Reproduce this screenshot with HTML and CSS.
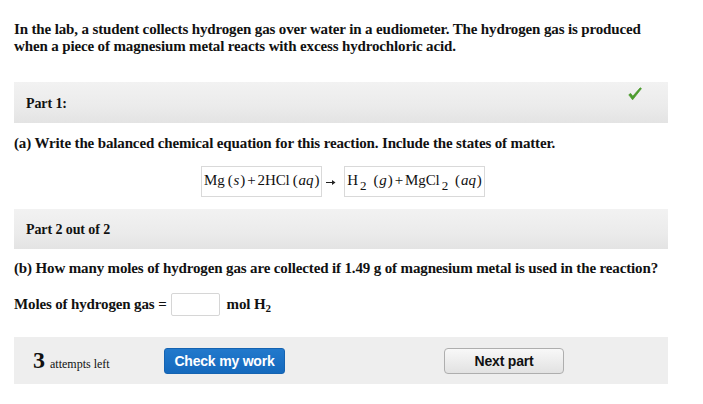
FILE: index.html
```html
<!DOCTYPE html>
<html>
<head>
<meta charset="utf-8">
<link rel="stylesheet" href="styles.css">
</head>
<body>
<div class="page">
  <p class="intro">In the lab, a student collects hydrogen gas over water in a eudiometer. The hydrogen gas is produced when a piece of magnesium metal reacts with excess hydrochloric acid.</p>

  <div class="bar part1">
    <span class="bar-title">Part 1:</span>
    <svg class="check" width="14" height="14" viewBox="0 0 14 14"><path d="M0.8 7.8 L4.6 12.8 L13.4 1.6 L12.2 0.8 L4.8 9.2 L2.6 6.4 Z" fill="#4b9b2c" stroke="#4b9b2c" stroke-width="0.8" stroke-linejoin="round"/></svg>
  </div>

  <p class="question">(a) Write the balanced chemical equation for this reaction. Include the states of matter.</p>

  <div class="equation">
    <span class="eqbox">Mg<span class="sp"></span>(<span class="th"></span><i>s</i><span class="th"></span>)<span class="op">+</span>2HCl<span class="sp"></span>(<span class="th"></span><i>aq</i><span class="th"></span>)</span>
    <svg class="arrow" width="10" height="7" viewBox="0 0 10 7"><path d="M0 3.5 H8" stroke="#222" stroke-width="1"/><path d="M6 1 L9.5 3.5 L6 6 Z" fill="#222"/></svg>
    <span class="eqbox">H<sub>2</sub><span class="sp2"></span>(<span class="th"></span><i>g</i><span class="th"></span>)<span class="op">+</span>MgCl<sub>2</sub><span class="sp2"></span>(<span class="th"></span><i>aq</i><span class="th"></span>)</span>
  </div>

  <div class="bar part2">
    <span class="bar-title">Part 2 out of 2</span>
  </div>

  <p class="question q2">(b) How many moles of hydrogen gas are collected if 1.49 g of magnesium metal is used in the reaction?</p>

  <div class="answer">
    <span>Moles of hydrogen gas =</span>
    <span class="input"></span>
    <span>mol H<sub>2</sub></span>
  </div>

  <div class="footer">
    <div class="attempts"><span class="num">3</span><span class="left">attempts left</span></div>
    <button class="btn btn-primary">Check my work</button>
    <button class="btn btn-next">Next part</button>
  </div>
</div>
</body>
</html>
```
FILE: styles.css
```css
html, body { margin: 0; padding: 0; background: #fff; }
body { font-family: "Liberation Serif", "Times New Roman", serif; color: #111; }
.page { width: 654px; padding: 21px 0 0 14px; }
.intro { margin: 0; width: 640px; font-weight: bold; font-size: 15px; line-height: 17px; letter-spacing: -0.14px; }
.bar {
  display: flex; align-items: center; justify-content: space-between;
  height: 41px; padding: 0 26px 0 12px;
  background: linear-gradient(#f2f2f2, #ebebeb 60%, #e3e3e3);
}
.part1 { margin-top: 27px; }
.bar-title { font-weight: bold; font-size: 14px; letter-spacing: -0.1px; padding-top: 2px; }
.part1 .bar-title { padding-top: 3px; }
.check { align-self: flex-start; margin-top: 5px; }
.question { margin: 11px 0 0 0; font-weight: bold; font-size: 15px; line-height: 18px; letter-spacing: -0.14px; }
.equation { display: flex; align-items: center; margin: 14px 0 0 187px; font-size: 15px; letter-spacing: -0.1px; }
.eqbox { display: inline-flex; align-items: baseline; height: 29px; line-height: 27px; padding: 0 2px 0 2px; border: 1px solid #d9d9d9; }
.eqbox sub { font-size: 13px; line-height: 0; position: relative; top: 5px; vertical-align: baseline; margin-left: 2px; }
.sp { display: inline-block; width: 3px; }
.sp2 { display: inline-block; width: 7px; }
.th { display: inline-block; width: 1px; }
.op { margin: 0 2px; }
.arrow { margin: 1px 8px 0 4px; }
.part2 { margin-top: 12px; height: 40px; }
.q2 { margin-top: 10px; }
.answer { display: flex; align-items: center; gap: 5px; margin-top: 16px; font-weight: bold; font-size: 15px; letter-spacing: -0.14px; }
.answer sub { font-size: 11px; vertical-align: -3px; line-height: 0; }
.input { display: inline-block; width: 47px; height: 21px; border: 1px solid #d6d6d6; border-radius: 2px; background: #fff; margin: 0 2px 0 -1px; }
.footer {
  display: flex; align-items: center; margin-top: 21px; height: 47px;
  background: #eeeeee; padding-left: 19px;
}
.attempts { display: flex; align-items: baseline; width: 131px; }
.num { font-weight: bold; font-size: 24px; margin-right: 5px; }
.left { font-size: 12px; letter-spacing: 0; }
.btn {
  font-family: "Liberation Sans", Arial, sans-serif; font-weight: bold; font-size: 14px;
  height: 26px; padding: 0; cursor: pointer; letter-spacing: -0.2px;
}
.btn-primary {
  width: 121px; color: #fff; border: 1px solid #1563b1; border-radius: 3px;
  background: linear-gradient(#2279cc, #1469bd);
}
.btn-next {
  width: 120px; margin-left: 159px; color: #111; border: 1px solid #aeaeae; border-radius: 4px;
  background: linear-gradient(#f8f8f8, #e2e2e2);
}
```
